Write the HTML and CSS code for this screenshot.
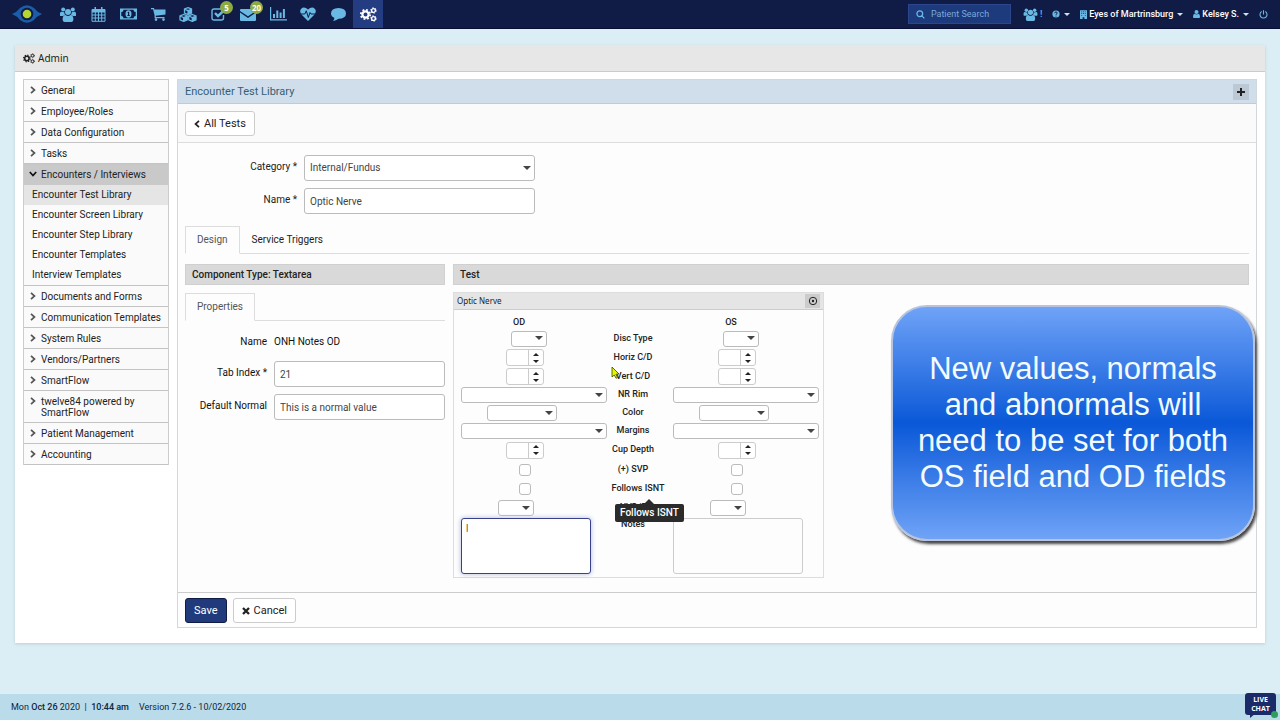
FILE: index.html
```
<!DOCTYPE html>
<html lang="en">
<head>
    <meta charset="UTF-8">
    <meta name="viewport" content="width=device-width, initial-scale=1.0">
    <title>Encounter Test Library</title>
    <link rel="stylesheet" href="styles.css">
</head>
<body>
    <!-- Shared icons -->
    <svg class="sprite" aria-hidden="true">
        <symbol id="i-users" viewBox="0 0 16 15">
            <circle cx="3.2" cy="2.6" r="2"/><circle cx="12.8" cy="2.6" r="2"/>
            <path d="M0 8.500V6.500Q0 4.700 1.200 4.700L4.300 5.300Q4.200 7 5.200 8Q4 8 3.200 9H.8Q0 9 0 8.500zM16 8.500V6.500Q16 4.700 14.800 4.700L11.700 5.300Q11.800 7 10.800 8Q12 8 12.800 9H15.200Q16 9 16 8.500z"/>
            <circle cx="8" cy="5" r="3"/>
            <path d="M2.600 12.600Q2.600 8 5.500 8Q8 10 10.500 8Q13.400 8 13.400 12.600Q13.400 15 11.500 15H4.500Q2.600 15 2.600 12.600z"/>
        </symbol>
        <symbol id="i-calendar" viewBox="0 0 15 15">
            <path d="M1 2.500H14V14.300H1zM1 5H14M1 8H14M1 11H14M4.300 5V14M7.500 5V14M10.700 5V14" fill="none" stroke="currentColor"/>
            <path d="M3.500 0H5V4H3.500zM10 0H11.500V4H10zM1 2H14V5H1z"/>
        </symbol>
        <symbol id="i-money" viewBox="0 0 17 12">
            <path fill-rule="evenodd" d="M0 .5H17V11.500H0zM1.300 4V8Q3.500 8 3.500 10.200H13.500Q13.500 8 15.700 8V4Q13.500 4 13.500 1.800H3.500Q3.500 4 1.300 4z"/>
            <path fill-rule="evenodd" d="M8.500 2.300Q11.500 2.300 11.500 6T8.500 9.700T5.500 6T8.500 2.300zM7.400 4.600L8 5.200V7.200H7.200V8H10V7.200H9.200V3.700H8.300z"/>
        </symbol>
        <symbol id="i-cart" viewBox="0 0 15 14">
            <path d="M0 1H3L3.300 2.500H14.500V7.500L4.800 8.800V10H13.500V11.200H3.600V8.500L2.100 2.200H0z"/>
            <circle cx="5" cy="12.600" r="1.300"/><circle cx="12.500" cy="12.600" r="1.300"/>
        </symbol>
        <symbol id="i-cubes" viewBox="0 0 18 15">
            <path d="M9 .7L12.500 2V6L9 7.500L5.500 6V2zM5.500 2.200L9 3.700L12.500 2.200M9 3.700V7.300M4.700 7.500L8.300 9V12.800L4.700 14.400L1 12.800V9zM1 9L4.700 10.500L8.300 9M4.700 10.500V14M13.300 7.500L17 9V12.800L13.300 14.400L9.700 12.800V9zM9.700 9L13.300 10.500L17 9M13.300 10.500V14" fill="none" stroke="currentColor" stroke-width="1.300"/>
            <path d="M9 3.700L12.500 2.200V6L9 7.500zM4.700 10.500L8.300 9V12.800L4.700 14.400zM13.300 10.500L17 9V12.800L13.300 14.400z"/>
        </symbol>
        <symbol id="i-check" viewBox="0 0 15 14">
            <path d="M12.500 8V11Q12.500 13 10.500 13H3Q1 13 1 11V4Q1 2 3 2H11" fill="none" stroke="currentColor" stroke-width="1.400"/>
            <path d="M4 6L7 9L13.500 3" fill="none" stroke="currentColor" stroke-width="2.400"/>
        </symbol>
        <symbol id="i-mail" viewBox="0 0 16 13">
            <path d="M0 3V2Q0 1 1 1H15Q16 1 16 2V3L8 8.300zM0 4.600L8 10L16 4.600V12Q16 13 15 13H1Q0 13 0 12z"/>
        </symbol>
        <symbol id="i-chart" viewBox="0 0 17 14">
            <path d="M0 0H1.200V12.300H17V13.500H0zM3 7H5V11H3zM6.300 3.500H8.300V11H6.300zM9.600 5.500H11.600V11H9.600zM12.900 2H14.900V11H12.900z"/>
        </symbol>
        <symbol id="i-heart" viewBox="0 0 16 14">
            <path d="M8 14L1.500 7.500Q-.8 4.500 1 2Q4-1.200 8 2.500Q12-1.200 15 2Q16.800 4.500 14.500 7.500z"/>
            <path d="M1 7H4.800L6.300 3.800L8.300 10.500L10 5.500L11 7H15" fill="none" stroke="#101c45"/>
        </symbol>
        <symbol id="i-comment" viewBox="0 0 15 13">
            <path d="M7.500 0Q15 .4 15 5.500T7.500 10.800Q5 12.800 2 13Q3.500 11.500 3.300 9.800Q0 8.300 0 5.500Q0 .4 7.500 0z"/>
        </symbol>
        <symbol id="i-cogs" viewBox="0 0 17 15">
            <g fill="none" stroke="currentColor">
                <circle cx="5.500" cy="7.500" r="3.100" stroke-width="2.200"/>
                <circle cx="5.500" cy="7.500" r="4.700" stroke-width="1.800" stroke-dasharray="1.850 1.840"/>
                <circle cx="13.500" cy="3.500" r="1.900" stroke-width="1.400"/>
                <circle cx="13.500" cy="3.500" r="2.800" stroke-width="1" stroke-dasharray="1.200 1.730"/>
                <circle cx="13.500" cy="11.500" r="1.900" stroke-width="1.400"/>
                <circle cx="13.500" cy="11.500" r="2.800" stroke-width="1" stroke-dasharray="1.200 1.730"/>
            </g>
        </symbol>
        <symbol id="i-search" viewBox="0 0 10 10">
            <path d="M6.500 6.500L9.300 9.300M7.400 4.200A3.200 3.200 0 1 1 1 4.200A3.200 3.200 0 1 1 7.400 4.200z" fill="none" stroke="currentColor" stroke-width="1.400"/>
        </symbol>
        <symbol id="i-help" viewBox="0 0 10 10">
            <circle cx="5" cy="5" r="4.500"/>
            <path d="M3.300 4Q3.500 2.400 5 2.400T6.600 3.900Q6.600 4.700 5 5.400V6M5 7V8.200" fill="none" stroke="#101c45" stroke-width="1.200"/>
        </symbol>
        <symbol id="i-building" viewBox="0 0 8 10">
            <path fill-rule="evenodd" d="M0 0H8V10H5V8H3V10H0zM1.500 1.500V2.300H2.500V1.500zM3.500 1.500V2.300H4.500V1.500zM5.500 1.500V2.300H6.500V1.500zM1.500 3.500V4.300H2.500V3.500zM3.500 3.500V4.300H4.500V3.500zM5.500 3.500V4.300H6.500V3.500zM1.500 5.500V6.300H2.500V5.500zM5.500 5.500V6.300H6.500V5.500z"/>
        </symbol>
        <symbol id="i-user" viewBox="0 0 8 9">
            <circle cx="4" cy="2.300" r="2.300"/><path d="M0 7.500Q0 4.300 2 4.300Q4 5.700 6 4.300Q8 4.300 8 7.500Q8 9 7 9H1Q0 9 0 7.500z"/>
        </symbol>
        <symbol id="i-power" viewBox="0 0 10 10">
            <path d="M3 1.700A3.900 3.900 0 1 0 7 1.700M5 .3V5" fill="none" stroke="currentColor" stroke-width="1.200"/>
        </symbol>
        <symbol id="i-chevron" viewBox="0 0 6 8"><path d="M1 .8L4.500 4L1 7.200" fill="none" stroke="currentColor" stroke-width="1.700"/></symbol>
        <symbol id="i-plus" viewBox="0 0 8 8"><path d="M4 0V8M0 4H8" fill="none" stroke="currentColor" stroke-width="2"/></symbol>
        <symbol id="i-times" viewBox="0 0 8 8"><path d="M1 1L7 7M7 1L1 7" fill="none" stroke="currentColor" stroke-width="2.300"/></symbol>
        <symbol id="i-target" viewBox="0 0 10 10"><circle cx="5" cy="5" r="3.700" fill="none" stroke="currentColor"/><circle cx="5" cy="5" r="1.200"/></symbol>
    </svg>

    <header class="topbar">
        <a href="#" class="logo" aria-label="Home">
            <svg viewBox="0 0 30 18" width="30" height="18">
                <path d="M0 9Q5 7 8 3Q15-2.500 22 3Q25 7 30 9Q25 11 22 15Q15 20.500 8 15Q5 11 0 9z" fill="#1c5dab"/>
                <circle cx="15" cy="9" r="6.300" fill="#101c45"/>
                <circle cx="15" cy="9" r="4.300" fill="#b8d432"/>
            </svg>
        </a>
        <nav class="main-nav" aria-label="Main">
            <a href="#" aria-label="Patients"><svg width="16" height="15"><use href="#i-users"/></svg></a>
            <a href="#" aria-label="Schedule"><svg width="15" height="15"><use href="#i-calendar"/></svg></a>
            <a href="#" aria-label="Billing"><svg width="17" height="12"><use href="#i-money"/></svg></a>
            <a href="#" aria-label="Orders"><svg width="15" height="14"><use href="#i-cart"/></svg></a>
            <a href="#" aria-label="Inventory"><svg width="18" height="15"><use href="#i-cubes"/></svg></a>
            <a href="#" aria-label="Tasks"><svg width="15" height="14"><use href="#i-check"/></svg><span class="badge">5</span></a>
            <a href="#" aria-label="Messages"><svg width="16" height="13"><use href="#i-mail"/></svg><span class="badge">20</span></a>
            <a href="#" aria-label="Reports"><svg width="17" height="14"><use href="#i-chart"/></svg></a>
            <a href="#" aria-label="Health"><svg width="16" height="14"><use href="#i-heart"/></svg></a>
            <a href="#" aria-label="Chat"><svg width="15" height="13"><use href="#i-comment"/></svg></a>
            <a href="#" class="active" aria-label="Admin"><svg width="17" height="15"><use href="#i-cogs"/></svg></a>
        </nav>
        <div class="top-tools">
            <label class="search">
                <svg width="9" height="9"><use href="#i-search"/></svg>
                <input type="text" placeholder="Patient Search" aria-label="Patient Search">
            </label>
            <a href="#" class="tool"><svg width="15" height="13"><use href="#i-users"/></svg><span class="count">!</span></a>
            <a href="#" class="tool" aria-label="Help"><svg width="8" height="8"><use href="#i-help"/></svg><i class="caret"></i></a>
            <a href="#" class="tool"><svg width="7" height="9"><use href="#i-building"/></svg><span>Eyes of Martrinsburg</span><i class="caret"></i></a>
            <a href="#" class="tool"><svg width="7" height="8"><use href="#i-user"/></svg><span>Kelsey S.</span><i class="caret"></i></a>
            <a href="#" class="tool" aria-label="Log out"><svg width="9" height="9"><use href="#i-power"/></svg></a>
        </div>
    </header>

    <main class="page">
        <section class="admin">
            <h1 class="admin-title"><svg width="12" height="11"><use href="#i-cogs"/></svg>Admin</h1>
            <div class="admin-body">
                <nav class="sidebar" aria-label="Admin sections">
                    <a href="#" class="item"><svg width="6" height="8"><use href="#i-chevron"/></svg>General</a>
                    <a href="#" class="item"><svg width="6" height="8"><use href="#i-chevron"/></svg>Employee/Roles</a>
                    <a href="#" class="item"><svg width="6" height="8"><use href="#i-chevron"/></svg>Data Configuration</a>
                    <a href="#" class="item"><svg width="6" height="8"><use href="#i-chevron"/></svg>Tasks</a>
                    <a href="#" class="item open"><svg width="6" height="8"><use href="#i-chevron"/></svg>Encounters / Interviews</a>
                    <div class="sub">
                        <a href="#" class="current">Encounter Test Library</a>
                        <a href="#">Encounter Screen Library</a>
                        <a href="#">Encounter Step Library</a>
                        <a href="#">Encounter Templates</a>
                        <a href="#">Interview Templates</a>
                    </div>
                    <a href="#" class="item"><svg width="6" height="8"><use href="#i-chevron"/></svg>Documents and Forms</a>
                    <a href="#" class="item"><svg width="6" height="8"><use href="#i-chevron"/></svg>Communication Templates</a>
                    <a href="#" class="item"><svg width="6" height="8"><use href="#i-chevron"/></svg>System Rules</a>
                    <a href="#" class="item"><svg width="6" height="8"><use href="#i-chevron"/></svg>Vendors/Partners</a>
                    <a href="#" class="item"><svg width="6" height="8"><use href="#i-chevron"/></svg>SmartFlow</a>
                    <a href="#" class="item"><svg width="6" height="8"><use href="#i-chevron"/></svg>twelve84 powered by SmartFlow</a>
                    <a href="#" class="item"><svg width="6" height="8"><use href="#i-chevron"/></svg>Patient Management</a>
                    <a href="#" class="item"><svg width="6" height="8"><use href="#i-chevron"/></svg>Accounting</a>
                </nav>

                <section class="library">
                    <div class="library-head">
                        <h2>Encounter Test Library</h2>
                        <button class="icon-btn add" aria-label="Add"><svg width="8" height="8"><use href="#i-plus"/></svg></button>
                    </div>
                    <div class="toolbar">
                        <button class="btn"><svg class="back" width="6" height="8"><use href="#i-chevron"/></svg>All Tests</button>
                    </div>

                    <div class="content">
                        <div class="form">
                            <label for="category">Category *</label>
                            <select id="category" class="control"><option>Internal/Fundus</option></select>
                            <label for="test-name">Name *</label>
                            <input id="test-name" class="control" type="text" value="Optic Nerve">
                        </div>

                        <div class="tabs">
                            <button class="tab selected">Design</button>
                            <button class="tab">Service Triggers</button>
                        </div>

                        <div class="columns">
                            <section class="component">
                                <h3 class="bar">Component Type: Textarea</h3>
                                <div class="tabs">
                                    <button class="tab selected">Properties</button>
                                </div>
                                <div class="form props">
                                    <span class="label">Name</span>
                                    <span class="value">ONH Notes OD</span>
                                    <label for="tab-index">Tab Index *</label>
                                    <input id="tab-index" class="control" type="text" value="21">
                                    <label for="default-normal">Default Normal</label>
                                    <input id="default-normal" class="control" type="text" value="This is a normal value">
                                </div>
                            </section>

                            <section class="test">
                                <h3 class="bar">Test</h3>
                                <div class="card">
                                    <div class="card-head">
                                        <h4>Optic Nerve</h4>
                                        <button class="icon-btn" aria-label="Settings"><svg width="10" height="10"><use href="#i-target"/></svg></button>
                                    </div>
                                    <div class="exam">
                                        <div class="row head"><span>OD</span><span></span><span>OS</span></div>
                                        <div class="row type">
                                            <div><select aria-label="Disc Type OD"></select></div>
                                            <span>Disc Type</span>
                                            <div><select aria-label="Disc Type OS"></select></div>
                                        </div>
                                        <div class="row">
                                            <div><div class="spinner"><input type="text" aria-label="Horiz C/D OD"><span><button aria-label="Up"></button><button aria-label="Down"></button></span></div></div>
                                            <span>Horiz C/D</span>
                                            <div><div class="spinner"><input type="text" aria-label="Horiz C/D OS"><span><button aria-label="Up"></button><button aria-label="Down"></button></span></div></div>
                                        </div>
                                        <div class="row">
                                            <div><div class="spinner"><input type="text" aria-label="Vert C/D OD"><span><button aria-label="Up"></button><button aria-label="Down"></button></span></div></div>
                                            <span>Vert C/D</span>
                                            <div><div class="spinner"><input type="text" aria-label="Vert C/D OS"><span><button aria-label="Up"></button><button aria-label="Down"></button></span></div></div>
                                        </div>
                                        <div class="row wide">
                                            <div><select aria-label="NR Rim OD"></select></div>
                                            <span>NR Rim</span>
                                            <div><select aria-label="NR Rim OS"></select></div>
                                        </div>
                                        <div class="row medium">
                                            <div><select aria-label="Color OD"></select></div>
                                            <span>Color</span>
                                            <div><select aria-label="Color OS"></select></div>
                                        </div>
                                        <div class="row wide">
                                            <div><select aria-label="Margins OD"></select></div>
                                            <span>Margins</span>
                                            <div><select aria-label="Margins OS"></select></div>
                                        </div>
                                        <div class="row tall">
                                            <div><div class="spinner"><input type="text" aria-label="Cup Depth OD"><span><button aria-label="Up"></button><button aria-label="Down"></button></span></div></div>
                                            <span>Cup Depth</span>
                                            <div><div class="spinner"><input type="text" aria-label="Cup Depth OS"><span><button aria-label="Up"></button><button aria-label="Down"></button></span></div></div>
                                        </div>
                                        <div class="row">
                                            <div><input type="checkbox" aria-label="SVP OD"></div>
                                            <span>(+) SVP</span>
                                            <div><input type="checkbox" aria-label="SVP OS"></div>
                                        </div>
                                        <div class="row">
                                            <div><input type="checkbox" aria-label="Follows ISNT OD"></div>
                                            <span class="has-tip">Follows ISNT<span class="tooltip" role="tooltip">Follows ISNT</span></span>
                                            <div><input type="checkbox" aria-label="Follows ISNT OS"></div>
                                        </div>
                                        <div class="row tall vessels">
                                            <div><select aria-label="NVD/E OD"></select></div>
                                            <span>NVD/E</span>
                                            <div><select aria-label="NVD/E OS"></select></div>
                                        </div>
                                        <div class="row notes">
                                            <div><textarea class="editing" aria-label="Notes OD">|</textarea></div>
                                            <span>Notes</span>
                                            <div><textarea aria-label="Notes OS"></textarea></div>
                                        </div>
                                    </div>
                                </div>
                            </section>
                        </div>
                    </div>

                    <div class="actions">
                        <button class="btn primary">Save</button>
                        <button class="btn"><svg width="8" height="8"><use href="#i-times"/></svg>Cancel</button>
                    </div>
                </section>
            </div>
        </section>
    </main>

    <footer class="statusbar">
        <span>Mon <b>Oct 26</b> 2020 &nbsp;|&nbsp; <b>10:44 am</b></span>
        <span>Version 7.2.6 - 10/02/2020</span>
    </footer>

    <!-- Floating layers -->
    <aside class="callout">New values, normals and abnormals will need to be set for both OS field and OD fields</aside>
    <button class="live-chat"><span>LIVE</span><span>CHAT</span></button>
    <svg class="pointer" viewBox="0 0 9 13" width="9" height="13" aria-hidden="true">
        <path d="M1 1V11L3.300 9L5 12.300L6.500 11.500L5 8.300L8 8z" fill="#e4f500" stroke="#3c4408" stroke-width=".8"/>
    </svg>
</body>
</html>
```
FILE: styles.css
```
* {
    box-sizing: border-box;
}

body {
    position: relative;
    display: flex;
    flex-direction: column;
    min-height: 100vh;
    margin: 0;
    background: #dceef5;
    color: #222;
    font-family: Roboto, "Liberation Sans", sans-serif;
    font-size: 10px;
    line-height: 12px;
}

a {
    color: inherit;
    text-decoration: none;
}

h1, h2, h3, h4 {
    margin: 0;
    font-weight: normal;
}

button, input, select, textarea {
    margin: 0;
    padding: 0;
    font: inherit;
    color: inherit;
    border-radius: 3px;
}

svg {
    fill: currentColor;
    flex: none;
}

.sprite {
    position: absolute;
    width: 0;
    height: 0;
}

/* Top bar */
.topbar {
    display: flex;
    align-items: center;
    height: 29px;
    padding: 0 12px;
    background: #101c45;
    color: #69b9e4;
    border-bottom: 1px solid #080d33;
}

.logo {
    display: flex;
}

.main-nav {
    display: flex;
    align-self: stretch;
    margin-left: 11px;
}

.main-nav a {
    position: relative;
    display: flex;
    align-items: center;
    justify-content: center;
    width: 30px;
}

.main-nav a.active {
    background: #243c82;
    color: #fff;
}

.badge {
    position: absolute;
    top: 1px;
    left: 17px;
    min-width: 13px;
    height: 13px;
    padding: 0 2px;
    border-radius: 7px;
    background: #8cac42;
    color: #fff;
    font: bold 8px/13px "Open Sans", sans-serif;
    text-align: center;
}

.top-tools {
    display: flex;
    align-items: center;
    gap: 10px;
    margin-left: auto;
    font-size: 9px;
}

.search {
    display: flex;
    align-items: center;
    gap: 6px;
    width: 103px;
    height: 20px;
    margin-right: 2px;
    padding: 0 7px;
    border: 1px solid #2b468c;
    background: #1d3a7d;
}

.search input {
    width: 100%;
    border: 0;
    background: none;
}

.search input::placeholder {
    color: #79a9d8;
    opacity: 1;
}

.tool {
    display: flex;
    align-items: center;
    gap: 2px;
}

.tool span {
    color: #fff;
    font-weight: 500;
}

.tool .count {
    color: #69b9e4;
}

.caret {
    margin-left: 2px;
    border: 3px solid transparent;
    border-top-color: #cfe4f2;
    border-bottom: 0;
}

/* Admin panel */
.page {
    flex: 1;
    padding: 16px 15px 50px;
}

.admin {
    background: #fff;
    box-shadow: 0 1px 3px #bcccd4;
}

.admin-title {
    display: flex;
    align-items: center;
    gap: 3px;
    height: 27px;
    padding: 0 8px;
    border-bottom: 1px solid #ccc;
    background: #e7e7e7;
    font: 10px/14px "Noto Sans", sans-serif;
}

.admin-body {
    display: flex;
    align-items: flex-start;
    gap: 8px;
    padding: 7px 8px 15px;
}

/* Sidebar */
.sidebar {
    flex: none;
    width: 146px;
    border: 1px solid #ccc;
    border-bottom: 0;
    background: #fafafa;
}

.item {
    display: flex;
    gap: 5px;
    padding: 5px 6px 4px;
    border-bottom: 1px solid #c4c4c4;
    line-height: 11px;
}

.item svg {
    margin-top: 1px;
    color: #555;
}

.item.open {
    border-color: #c9c9c9;
    background: #c9c9c9;
}

.item.open svg {
    color: #111;
    transform: rotate(90deg);
}

.sub {
    border-bottom: 1px solid #c4c4c4;
}

.sub a {
    display: block;
    padding: 4px 8px;
}

.sub .current {
    background: #e5e5e5;
}

/* Library panel */
.library {
    flex: 1;
    min-width: 0;
    border: 1px solid #d0d8dc;
    background: #fdfdfd;
}

.library-head {
    display: flex;
    align-items: center;
    justify-content: space-between;
    height: 24px;
    padding: 0 7px;
    border-bottom: 1px solid #bccdda;
    background: #d0deeb;
}

.library-head h2 {
    color: #355f75;
    font-size: 11px;
}

.icon-btn {
    display: flex;
    align-items: center;
    justify-content: center;
    width: 15px;
    height: 14px;
    border: 0;
    border-radius: 0;
    background: #ccc;
}

.icon-btn.add {
    width: 16px;
    height: 16px;
    background: #bcc9d4;
}

.toolbar {
    padding: 7px 7px 6px;
    border-bottom: 1px solid #ddd;
    background: #fafafa;
}

.btn {
    display: inline-flex;
    align-items: center;
    gap: 4px;
    height: 25px;
    padding: 0 8px;
    border: 1px solid #ccc;
    background: #fff;
    font-size: 11px;
}

.btn .back {
    transform: rotate(180deg);
}

.btn.primary {
    border-color: #101c45;
    background: #213a7c;
    color: #fff;
}

.content {
    padding: 12px 7px 14px;
}

.form {
    display: grid;
    grid-template-columns: 112px 231px;
    gap: 7px;
    line-height: 24px;
}

.form label,
.form .label {
    text-align: right;
}

.control {
    width: 100%;
    height: 26px;
    padding: 0 5px;
    border: 1px solid #bbb;
    background-color: #fff;
    color: #444;
}

select {
    appearance: none;
    border: 1px solid #bbb;
    background: #fff url("data:image/svg+xml,%3Csvg xmlns='http://www.w3.org/2000/svg' width='8' height='5'%3E%3Cpath d='M0 0h8L4 4z' fill='%23444'/%3E%3C/svg%3E") no-repeat right 3px center;
}

.tabs {
    display: flex;
    margin-top: 12px;
    border-bottom: 1px solid #ddd;
}

.tab {
    height: 28px;
    margin-bottom: -1px;
    padding: 0 11px;
    border: 1px solid transparent;
    border-radius: 0;
    background: none;
}

.tab.selected {
    border-color: #ddd #ddd #fdfdfd;
    background: #fdfdfd;
    color: #555;
}

.columns {
    display: flex;
    gap: 8px;
    margin-top: 10px;
}

.component {
    flex: none;
    width: 260px;
}

.component .tabs {
    margin-top: 8px;
}

.test {
    flex: 1;
}

.bar {
    padding: 4px 6px 3px;
    border: 1px solid #d0d0d0;
    background: #d9d9d9;
    font-size: 10px;
    font-weight: 500;
}

.props {
    grid-template-columns: 82px 171px;
    margin-top: 9px;
    color: #111;
}

/* Exam card */
.card {
    width: 371px;
    margin-top: 7px;
    border: 1px solid #ddd;
}

.card-head {
    display: flex;
    align-items: center;
    justify-content: space-between;
    height: 17px;
    padding: 0 3px;
    border-bottom: 1px solid #ccc;
    background: #e5e5e5;
}

.card-head h4 {
    font: 8px/12px "Noto Sans", sans-serif;
}

.exam {
    padding: 4px 4px 3px 7px;
    font-size: 9px;
    font-weight: 500;
}

.row {
    display: grid;
    grid-template-columns: 146px 1fr 146px;
    height: 19px;
    align-items: center;
    text-align: center;
}

.row > div {
    display: flex;
    justify-content: center;
    padding-right: 18px;
}

.row > span {
    margin: -2px 14px 0 0;
    white-space: nowrap;
}

.row select {
    width: 36px;
    height: 16px;
}

.row.head {
    height: 15px;
}

.row.head > span {
    margin: 0;
    padding-right: 30px;
}

.row.type > div {
    padding-right: 11px;
}

.row.wide,
.row.medium {
    height: 18px;
}

.row.wide > div {
    padding-right: 0;
}

.row.wide select {
    width: 100%;
}

.row.medium > div {
    padding-right: 24px;
}

.row.medium select {
    width: 70px;
}

.row.tall {
    height: 20px;
}

.row.vessels > div {
    padding-right: 36px;
}

.row.notes {
    height: auto;
    align-items: start;
}

.row.notes > span {
    margin-top: 0;
}

.row.notes > div {
    justify-content: flex-start;
    padding-right: 0;
}

.spinner {
    display: flex;
    width: 38px;
    height: 17px;
    border: 1px solid #ccc;
    border-radius: 3px;
    background: #fff;
}

.spinner input {
    width: 22px;
    border: 0;
    border-right: 1px solid #ccc;
    border-radius: 0;
    background: none;
}

.spinner span {
    flex: 1;
    display: flex;
    flex-direction: column;
    align-items: center;
    justify-content: center;
    gap: 4px;
}

.spinner button {
    width: 0;
    height: 0;
    border: 3px solid transparent;
    border-top: 0;
    border-bottom-color: #222;
    border-radius: 0;
    background: none;
}

.spinner button + button {
    border-top: 3px solid #222;
    border-bottom: 0;
}

.row input[type="checkbox"] {
    appearance: none;
    width: 12px;
    height: 12px;
    border: 1px solid #bbb;
    background: #fff;
}

textarea {
    display: block;
    width: 130px;
    height: 56px;
    padding: 3px 4px;
    border: 1px solid #ccc;
    background: #fdfdfd;
    resize: none;
}

textarea.editing {
    border-color: #3a418c;
    background: #fff;
    box-shadow: 0 0 5px #aeb8dc;
}

.row > .has-tip {
    position: relative;
    margin-right: 4px;
}

.tooltip {
    position: absolute;
    top: 22px;
    left: 8px;
    z-index: 1;
    padding: 3px 5px;
    border-radius: 2px;
    background: #2b2b2b;
    color: #fff;
    font-size: 10px;
}

.tooltip::before {
    content: "";
    position: absolute;
    bottom: 100%;
    left: 50%;
    margin-left: -5px;
    border: 5px solid transparent;
    border-top: 0;
    border-bottom-color: #2b2b2b;
}

.actions {
    display: flex;
    gap: 6px;
    padding: 5px 7px 4px;
    border-top: 1px solid #ccc;
}

/* Status bar */
.statusbar {
    display: flex;
    align-items: center;
    gap: 10px;
    height: 26px;
    padding: 0 11px;
    background: #b9dbea;
    color: #12263c;
    font-size: 9px;
}

.statusbar b {
    font-weight: 500;
}

/* Floating layers */
.callout {
    position: absolute;
    top: 305px;
    right: 25px;
    display: flex;
    align-items: center;
    width: 364px;
    height: 236px;
    padding: 0 20px;
    border: 2px solid #b8c4de;
    border-radius: 36px;
    background: linear-gradient(#6fa3f7, #0a58d8 50%, #6fa3f7);
    box-shadow: 2px 3px 3px #444;
    color: #f2fbff;
    font: 31px/36px "Liberation Sans", Arial, sans-serif;
    text-align: center;
}

.live-chat {
    position: absolute;
    right: 4px;
    bottom: 5px;
    display: flex;
    flex-direction: column;
    align-items: center;
    justify-content: center;
    width: 31px;
    height: 22px;
    border: 0;
    background: #1b2a68;
    color: #fff;
    font: bold 7px/9px "Open Sans", sans-serif;
}

.live-chat::before {
    content: "";
    position: absolute;
    top: 20px;
    left: 5px;
    border: 5px solid transparent;
    border-width: 5px 6px 0 0;
    border-top-color: #1b2a68;
}

.live-chat::after {
    content: "";
    position: absolute;
    right: -2px;
    bottom: -3px;
    width: 7px;
    height: 7px;
    border-radius: 50%;
    background: #2f9e5c;
}

.pointer {
    position: absolute;
    top: 366px;
    left: 611px;
}
```
